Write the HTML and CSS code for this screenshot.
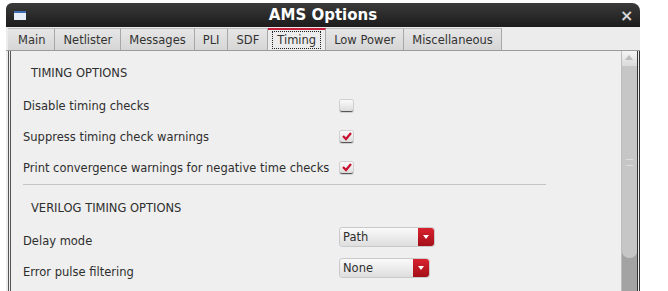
FILE: index.html
```html
<!DOCTYPE html>
<html lang="en">
<head>
    <meta charset="UTF-8">
    <title>AMS Options</title>
    <link rel="stylesheet" href="styles.css">
</head>
<body>
    <div class="window">
        <div class="titlebar">
            <span class="win-icon"></span>
            <span class="title">AMS Options</span>
            <span class="close">&times;</span>
        </div>
        <div class="tabs">
            <div class="tab">Main</div>
            <div class="tab">Netlister</div>
            <div class="tab">Messages</div>
            <div class="tab">PLI</div>
            <div class="tab">SDF</div>
            <div class="tab active"><span class="focus">Timing</span></div>
            <div class="tab">Low Power</div>
            <div class="tab">Miscellaneous</div>
        </div>
        <div class="frame">
            <div class="content">
                <div class="section">TIMING OPTIONS</div>
                <div class="row">
                    <span class="label">Disable timing checks</span>
                    <span class="check"></span>
                </div>
                <div class="row">
                    <span class="label">Suppress timing check warnings</span>
                    <span class="check">
                        <svg width="13" height="11" viewBox="0 0 13 11"><path d="M3 5 L6 8 L11 2" fill="none" stroke="#c8102e" stroke-width="2.2"/></svg>
                    </span>
                </div>
                <div class="row">
                    <span class="label">Print convergence warnings for negative time checks</span>
                    <span class="check">
                        <svg width="13" height="11" viewBox="0 0 13 11"><path d="M3 5 L6 8 L11 2" fill="none" stroke="#c8102e" stroke-width="2.2"/></svg>
                    </span>
                </div>
                <hr class="sep">
                <div class="section">VERILOG TIMING OPTIONS</div>
                <div class="row">
                    <span class="label">Delay mode</span>
                    <span class="combo wide"><span class="value">Path</span><span class="arrow"></span></span>
                </div>
                <div class="row">
                    <span class="label">Error pulse filtering</span>
                    <span class="combo"><span class="value">None</span><span class="arrow"></span></span>
                </div>
            </div>
            <div class="scrollbar">
                <div class="sb-up"></div>
                <div class="sb-thumb"><span class="grip"></span></div>
                <div class="sb-rest"></div>
            </div>
        </div>
    </div>
</body>
</html>
```

FILE: styles.css
```css
body {
    margin: 0;
    background: #fff;
    font-family: "DejaVu Sans", sans-serif;
    font-size: 11.5px;
    color: #2e2e2e;
    overflow: hidden;
}

.window {
    margin: 3px 0 0 6px;
    width: 634px;
    height: 300px;
    background: #ececec;
    border-radius: 6px 8px 0 0;
    overflow: hidden;
    display: flex;
    flex-direction: column;
}

.titlebar {
    height: 24px;
    background: linear-gradient(#3a3a3a, #1c1c1c);
    display: flex;
    align-items: center;
    color: #fff;
}

.win-icon {
    width: 12px;
    height: 7px;
    margin-left: 8px;
    background: #e8eef8;
    border-top: 2px solid #3d6fb5;
}

.title {
    flex: 1;
    text-align: center;
    font-weight: bold;
    font-size: 15px;
    margin-left: 0;
}

.close {
    width: 14px;
    font-size: 16px;
    font-weight: bold;
    color: #d8d8d8;
    margin-right: 6px;
}

.tabs {
    height: 23px;
    display: flex;
    padding-left: 2px;
    border-bottom: 1px solid #9a9a9a;
    background: #ececec;
}

.tab {
    margin-top: 1px;
    padding: 0 8px;
    display: flex;
    align-items: center;
    background: linear-gradient(#e6e6e6, #d6d6d6);
    border-right: 1px solid #a8a8a8;
    border-top: 1px solid #bcbcbc;
    color: #333;
}

.tab:first-child {
    padding: 0 9px 0 10px;
}

.tab.active {
    background: #ececec;
    border-top: 2px solid #c41e3a;
    padding: 0 4px;
}

.focus {
    border: 1px dotted #222;
    padding: 1px 4px;
}

.frame {
    flex: 1;
    display: flex;
    border-left: 3px double #555;
    margin-left: 2px;
    border-right: 3px double #333;
    background: #efefef;
}

.content {
    flex: 1;
    padding: 9px 0 0 12px;
}

.section {
    padding-left: 8px;
    height: 26px;
    line-height: 26px;
    margin-bottom: 4px;
}

.row {
    display: flex;
    align-items: center;
    height: 31px;
}

.label {
    width: 317px;
    white-space: nowrap;
}

.check {
    width: 13px;
    height: 11px;
    background: linear-gradient(#fbfbfb, #dcdcdc);
    border-bottom: 1px solid #555;
    border-radius: 2px;
    box-shadow: 0 0 0 1px #d0d0d0;
}

.check svg {
    display: block;
}

.sep {
    border: 0;
    border-top: 1px solid #c4c4c4;
    margin: 1px 75px 10px 0;
}

.combo {
    width: 89px;
    height: 18px;
    margin-bottom: 8px;
    display: flex;
    border-radius: 3px;
    background: linear-gradient(#fafafa, #dedede);
    box-shadow: 0 0 0 1px #c9c9c9;
}

.combo.wide {
    width: 94px;
}

.value {
    flex: 1;
    padding-left: 3px;
    line-height: 18px;
}

.arrow {
    width: 16px;
    background: linear-gradient(#d8222e, #a40f18);
    border-radius: 0 3px 3px 0;
    position: relative;
}

.arrow::after {
    content: "";
    position: absolute;
    left: 5px;
    top: 7px;
    border-left: 3px solid transparent;
    border-right: 3px solid transparent;
    border-top: 4px solid #fff;
}

.scrollbar {
    width: 15px;
    display: flex;
    flex-direction: column;
    background: #a3a3a3;
    border-left: 1px solid #bdbdbd;
}

.sb-up {
    height: 15px;
    background: linear-gradient(#f4f4f4, #dadada);
    position: relative;
}

.sb-up::after {
    content: "";
    position: absolute;
    left: 3px;
    top: 4px;
    border-left: 4px solid transparent;
    border-right: 4px solid transparent;
    border-bottom: 5px solid #bdbdbd;
}

.sb-thumb {
    height: 192px;
    background: #c6c6c6;
    border-radius: 0 0 7px 7px;
    display: flex;
    align-items: center;
    justify-content: center;
}

.grip {
    width: 7px;
    height: 5px;
    border-top: 1px solid #ddd;
    border-bottom: 1px solid #ddd;
}

.sb-rest {
    flex: 1;
}
```
